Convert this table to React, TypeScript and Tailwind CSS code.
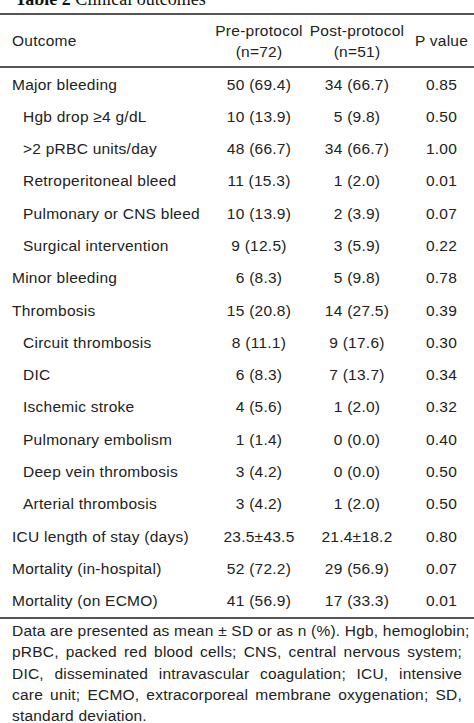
type Row = { label: string; pre: string; post: string; p: string; sub?: boolean };

const rows: Row[] = [
  { label: "Major bleeding", pre: "50 (69.4)", post: "34 (66.7)", p: "0.85" },
  { label: "Hgb drop ≥4 g/dL", pre: "10 (13.9)", post: "5 (9.8)", p: "0.50", sub: true },
  { label: ">2 pRBC units/day", pre: "48 (66.7)", post: "34 (66.7)", p: "1.00", sub: true },
  { label: "Retroperitoneal bleed", pre: "11 (15.3)", post: "1 (2.0)", p: "0.01", sub: true },
  { label: "Pulmonary or CNS bleed", pre: "10 (13.9)", post: "2 (3.9)", p: "0.07", sub: true },
  { label: "Surgical intervention", pre: "9 (12.5)", post: "3 (5.9)", p: "0.22", sub: true },
  { label: "Minor bleeding", pre: "6 (8.3)", post: "5 (9.8)", p: "0.78" },
  { label: "Thrombosis", pre: "15 (20.8)", post: "14 (27.5)", p: "0.39" },
  { label: "Circuit thrombosis", pre: "8 (11.1)", post: "9 (17.6)", p: "0.30", sub: true },
  { label: "DIC", pre: "6 (8.3)", post: "7 (13.7)", p: "0.34", sub: true },
  { label: "Ischemic stroke", pre: "4 (5.6)", post: "1 (2.0)", p: "0.32", sub: true },
  { label: "Pulmonary embolism", pre: "1 (1.4)", post: "0 (0.0)", p: "0.40", sub: true },
  { label: "Deep vein thrombosis", pre: "3 (4.2)", post: "0 (0.0)", p: "0.50", sub: true },
  { label: "Arterial thrombosis", pre: "3 (4.2)", post: "1 (2.0)", p: "0.50", sub: true },
  { label: "ICU length of stay (days)", pre: "23.5±43.5", post: "21.4±18.2", p: "0.80" },
  { label: "Mortality (in-hospital)", pre: "52 (72.2)", post: "29 (56.9)", p: "0.07" },
  { label: "Mortality (on ECMO)", pre: "41 (56.9)", post: "17 (33.3)", p: "0.01" },
];

// footnote lines as set in the source, each justified to full width except the last
const note = [
  "Data are presented as mean ± SD or as n (%). Hgb, hemoglobin;",
  "pRBC, packed red blood cells; CNS, central nervous system;",
  "DIC, disseminated intravascular coagulation; ICU, intensive",
  "care unit; ECMO, extracorporeal membrane oxygenation; SD,",
  "standard deviation.",
];

const grid = "grid grid-cols-[213px_92px_104px_65px] items-center";

export default function App() {
  return (
    <div className="w-[474px] h-[723px] overflow-hidden bg-white text-[#222] font-['Liberation_Sans',Arial,sans-serif] text-[15.5px] tracking-[0.25px]">
      <div className="-mt-[10px] pl-[15px] h-[23px] font-['Liberation_Serif','Times_New_Roman',serif] text-[18px] leading-[18px] tracking-normal text-[#111]">
        <span className="font-bold">Table 2</span> Clinical outcomes
      </div>

      <div className={`${grid} h-[55px] border-y-2 border-[#555] leading-[21px]`}>
        <div className="pl-[12px]">Outcome</div>
        <div className="text-center">
          Pre-protocol
          <br />
          (n=72)
        </div>
        <div className="text-center">
          Post-protocol
          <br />
          (n=51)
        </div>
        <div className="text-center">P value</div>
      </div>

      <div className="border-b-2 border-[#555]">
        {rows.map((r, i) => (
          <div key={i} className={`${grid} h-[32.3px]`}>
            <div className={r.sub ? "pl-[23px]" : "pl-[12px]"}>{r.label}</div>
            <div className="text-center">{r.pre}</div>
            <div className="text-center">{r.post}</div>
            <div className="text-center">{r.p}</div>
          </div>
        ))}
      </div>

      <div className="px-[12px] pt-[1px] leading-[21.3px] tracking-[0.2px]">
        {note.map((line, i) => (
          <div
            key={i}
            className={
              i < note.length - 1
                ? "whitespace-nowrap text-justify [text-align-last:justify]"
                : "whitespace-nowrap"
            }
          >
            {line}
          </div>
        ))}
      </div>
    </div>
  );
}
